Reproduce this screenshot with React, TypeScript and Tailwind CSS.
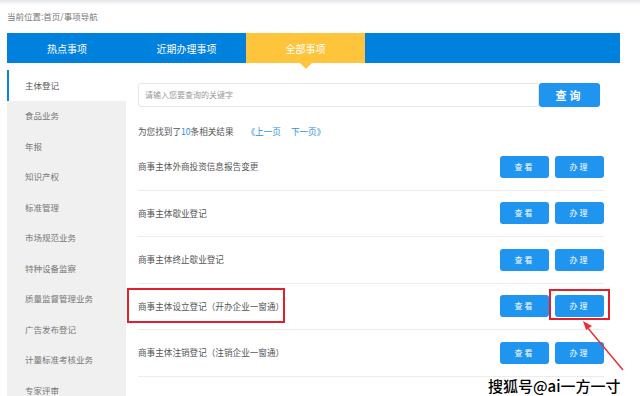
import React from "react";

const menu = [
  "主体登记",
  "食品业务",
  "年报",
  "知识产权",
  "标准管理",
  "市场规范业务",
  "特种设备监察",
  "质量监督管理业务",
  "广告发布登记",
  "计量标准考核业务",
  "专家评审",
];

const items = [
  "商事主体外商投资信息报告变更",
  "商事主体歇业登记",
  "商事主体终止歇业登记",
  "商事主体设立登记（开办企业一窗通）",
  "商事主体注销登记（注销企业一窗通）",
];

export default function App() {
  return (
    <div className="relative w-[640px] h-[396px] overflow-hidden bg-white font-['Noto_Sans_CJK_SC',sans-serif] text-[#555]">
      <div className="h-[5px] bg-gradient-to-b from-[#e3e6ea] to-white" />
      <div className="h-[28px] px-[7px] pt-[5px] text-[8.5px] leading-[12px] text-[#777]">当前位置:首页/事项导航</div>

      {/* tabs */}
      <div className="mx-[7px] w-[613px] h-[30px] bg-[#0081dd] flex text-white text-[10px]">
        <div className="w-[120px] flex items-center justify-center">热点事项</div>
        <div className="w-[119px] flex items-center justify-center">近期办理事项</div>
        <div className="relative w-[119px] flex items-center justify-center bg-[#fec53c]">
          全部事项
          <span className="absolute left-1/2 -translate-x-1/2 top-full w-0 h-0 border-x-[6px] border-x-transparent border-t-[6px] border-t-[#fec53c]" />
        </div>
      </div>

      <div className="flex mt-[7px] ml-[7px]">
        {/* sidebar */}
        <div className="w-[119px] bg-[#f0f0f0] h-[340px]">
          {menu.map((m, i) => (
            <div
              key={m}
              className={
                i === 0
                  ? "h-[30.5px] flex items-center pl-[16px] bg-white border-l-[2px] border-[#0a84e0] text-[8.5px] text-[#555]"
                  : "h-[30.5px] flex items-center pl-[18px] text-[8.5px] text-[#777]"
              }
            >
              {m}
            </div>
          ))}
        </div>

        {/* content */}
        <div className="pl-[12px] pt-[13px] w-[478px]">
          <div className="flex w-[462px] h-[24px]">
            <div className="flex-1 border border-[#e6e6e6] rounded-l-[3px] flex items-center pl-[6px] text-[8px] text-[#999]">
              请输入您要查询的关键字
            </div>
            <button className="w-[61px] h-[24px] bg-[#1f95ef] rounded-[3px] text-white text-[11px] font-bold tracking-[3px]">查询</button>
          </div>

          <div className="mt-[18px] h-[12px] flex items-center text-[8.6px] text-[#555]">
            <span>
              为您找到了<span className="text-[#1f8fe8]">10</span>条相关结果
            </span>
            <span className="ml-[13px] text-[#2a8fe0]">《上一页</span>
            <span className="ml-[10px] text-[#2a8fe0]">下一页》</span>
          </div>

          <div className="mt-[7px] w-[466px]">
            {items.map((t, i) => (
              <div key={t} className="relative h-[46.5px] flex items-center justify-between border-b border-[#ececec] text-[8.6px] text-[#555]">
                <span>{t}</span>
                {i === 3 && (
                  <span className="absolute left-[-11px] top-[4px] w-[158px] h-[35px] border-2 border-[#e0202c]" />
                )}
                <div className="flex gap-[6px]">
                  <button className="w-[49px] h-[22px] bg-[#1f95ef] rounded-[3px] text-white text-[8px] tracking-[2px]">查看</button>
                  <div className="relative">
                    <button className="w-[49px] h-[22px] bg-[#1f95ef] rounded-[3px] text-white text-[8px] tracking-[2px]">办理</button>
                    {i === 3 && (
                      <span className="absolute left-[-6px] top-[-6px] w-[61px] h-[31px] border-2 border-[#e0202c]" />
                    )}
                  </div>
                </div>
              </div>
            ))}
          </div>
        </div>
      </div>

      {/* annotation arrow */}
      <svg className="absolute left-0 top-0 pointer-events-none" width="640" height="396">
        <line x1="623" y1="370" x2="587" y2="327" stroke="#e8303a" strokeWidth="1.5" />
        <path d="M583 321 L592 326 L586 330 Z" fill="#e8303a" />
      </svg>

      <div className="absolute left-[488px] top-[377px] text-[15px] leading-[18px] font-medium text-black [text-shadow:0_0_2px_#fff,0_0_2px_#fff,0_0_2px_#fff]">
        搜狐号@ai一方一寸
      </div>
    </div>
  );
}
